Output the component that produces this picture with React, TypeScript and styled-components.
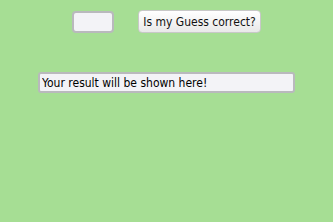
import React from "react";
import styled, { createGlobalStyle } from "styled-components";

const Global = createGlobalStyle`
  html, body { margin: 0; padding: 0; background: #a6de94; }
  body { font-family: "DejaVu Sans", sans-serif; }
`;

const Page = styled.div`
  width: 333px;
  height: 222px;
  background: #a6de94;
  display: flex;
  flex-direction: column;
  align-items: center;
  padding-top: 10px;
  box-sizing: border-box;
`;

const Row = styled.div`
  display: flex;
  align-items: center;
  gap: 24px;
`;

const GuessInput = styled.input`
  width: 42px;
  height: 22px;
  box-sizing: border-box;
  border: 2px solid #b9b9bd;
  border-radius: 4px;
  background: #f3f3f7;
  padding: 0 3px;
  font-family: "DejaVu Sans", sans-serif;
  font-size: 12px;
`;

const CheckButton = styled.button`
  height: 23px;
  padding: 0 4px;
  border: 1px solid #c8c8c8;
  border-radius: 4px;
  background: linear-gradient(#ffffff, #e9e9e9);
  font-family: "DejaVu Sans Condensed", "DejaVu Sans", sans-serif;
  font-size: 12px;
  color: #111;
`;

const Result = styled.input`
  margin-top: 39px;
  width: 257px;
  height: 21px;
  box-sizing: border-box;
  border: 2px solid #b9b9bd;
  border-radius: 3px;
  background: #f3f3f7;
  padding: 0 2px;
  font-family: "DejaVu Sans Condensed", "DejaVu Sans", sans-serif;
  font-size: 12px;
  color: #000;
`;

export default function App() {
  return (
    <>
      <Global />
      <Page>
        <Row>
          <GuessInput />
          <CheckButton>Is my Guess correct?</CheckButton>
        </Row>
        <Result readOnly value="Your result will be shown here!" />
      </Page>
    </>
  );
}
